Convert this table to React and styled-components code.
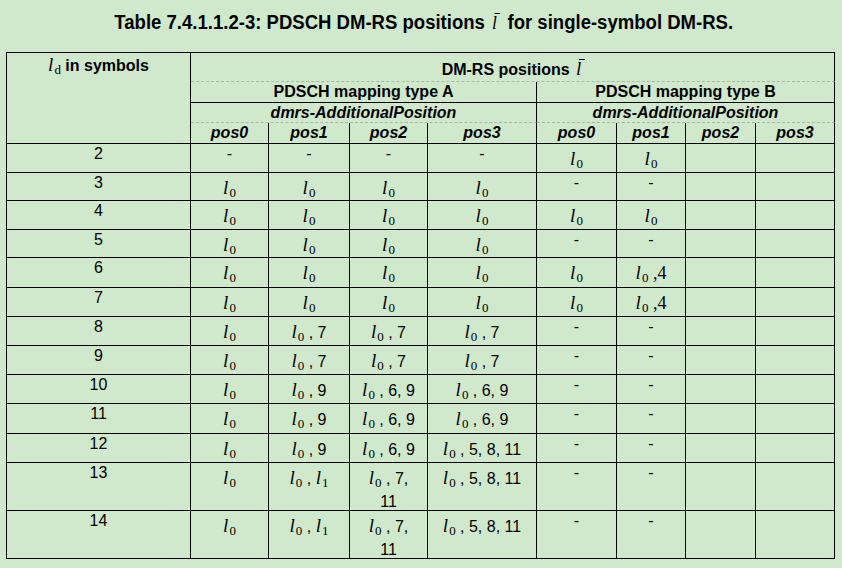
import React from 'react';
import styled, { createGlobalStyle } from 'styled-components';

const GlobalStyle = createGlobalStyle`
  html, body {
    margin: 0;
    padding: 0;
    background: #d0e8cc;
  }
  body {
    font-family: "Liberation Sans", Arial, sans-serif;
    color: #000;
  }
`;

// Column widths and row heights measured from the spec table (borders included)
const COLS = '184px 78px 81px 78px 109px 80px 69px 70px 79px';
const HEAD_ROWS = '29px 21px 20px 21px';

const Page = styled.div`
  width: 842px;
  height: 568px;
  padding: 0 0 0 6px;
  box-sizing: border-box;
`;

const TitleBar = styled.div`
  height: 52px;
  padding-top: 10px;
  box-sizing: border-box;
  display: flex;
  justify-content: center;
`;

// The spec uses Arial Narrow Bold; squeeze Liberation Sans Bold to the same width
const Title = styled.h1`
  margin: 0;
  display: inline-block;
  font-family: "Liberation Sans Narrow", "Liberation Sans", sans-serif;
  font-weight: bold;
  font-size: 20px;
  line-height: 24px;
  white-space: pre;
  transform: scaleX(0.927);
  transform-origin: center;
`;

const Grid = styled.div`
  display: grid;
  grid-template-columns: ${COLS};
  grid-template-rows: ${HEAD_ROWS} repeat(4, 28.6px) repeat(7, 29.2px) 48px 48px;
  width: max-content;
  border-top: 1px solid #000;
  border-left: 1px solid #000;
`;

const Cell = styled.div`
  grid-column: ${(p) => p.$col || 'auto'};
  grid-row: ${(p) => p.$row || 'auto'};
  border-right: 1px solid #000;
  border-bottom: ${(p) => (p.$dashed ? '1px dashed #a9b8a6' : '1px solid #000')};
  text-align: center;
  font-size: 16px;
  line-height: ${(p) => (p.$math ? '23px' : '18px')};
  padding: ${(p) => (p.$math ? '3px 4px 0' : '1px 4px 0')};
  overflow: hidden;
`;

const HeadCell = styled(Cell)`
  font-weight: bold;
  font-style: ${(p) => (p.$italic ? 'italic' : 'normal')};
  display: flex;
  align-items: ${(p) => (p.$top ? 'flex-start' : 'center')};
  justify-content: center;
  padding: ${(p) => (p.$top ? '3px 4px 0' : '0 4px')};
  line-height: 18px;
`;

const Ell = styled.span`
  font-family: "Liberation Serif", "Times New Roman", serif;
  font-style: italic;
  font-weight: normal;
  font-size: 19px;
`;

const Sub = styled.sub`
  font-family: "Liberation Serif", "Times New Roman", serif;
  font-style: normal;
  font-weight: normal;
  font-size: 13px;
  vertical-align: -3px;
  line-height: 0;
  margin-left: 1px;
`;

const Serif = styled.span`
  font-family: "Liberation Serif", "Times New Roman", serif;
  font-size: 18px;
`;

const Bar = styled.span`
  font-family: "Liberation Serif", "Times New Roman", serif;
  font-style: italic;
  font-weight: normal;
  font-size: 19px;
  position: relative;
  margin: 0 ${(p) => p.$after || 2}px 0 2px;

  &::before {
    content: '';
    position: absolute;
    top: 1px;
    left: 3px;
    width: 6px;
    height: 1px;
    background: #000;
  }
`;

const L = ({ n }) => (
  <>
    <Ell>l</Ell>
    <Sub>{n}</Sub>
  </>
);

const L0 = <L n="0" />;
const L1 = <L n="1" />;

const l0c = (rest) => (
  <>
    {L0} {rest}
  </>
);

const l04 = (
  <>
    {L0}
    <Serif> ,4</Serif>
  </>
);

const wrap = (
  <>
    {L0} , 7,
    <br />
    11
  </>
);

const rows = [
  { n: '2', v: ['-', '-', '-', '-', L0, L0, '', ''] },
  { n: '3', v: [L0, L0, L0, L0, '-', '-', '', ''] },
  { n: '4', v: [L0, L0, L0, L0, L0, L0, '', ''] },
  { n: '5', v: [L0, L0, L0, L0, '-', '-', '', ''] },
  { n: '6', v: [L0, L0, L0, L0, L0, l04, '', ''] },
  { n: '7', v: [L0, L0, L0, L0, L0, l04, '', ''] },
  { n: '8', v: [L0, l0c(', 7'), l0c(', 7'), l0c(', 7'), '-', '-', '', ''] },
  { n: '9', v: [L0, l0c(', 7'), l0c(', 7'), l0c(', 7'), '-', '-', '', ''] },
  { n: '10', v: [L0, l0c(', 9'), l0c(', 6, 9'), l0c(', 6, 9'), '-', '-', '', ''] },
  { n: '11', v: [L0, l0c(', 9'), l0c(', 6, 9'), l0c(', 6, 9'), '-', '-', '', ''] },
  { n: '12', v: [L0, l0c(', 9'), l0c(', 6, 9'), l0c(', 5, 8, 11'), '-', '-', '', ''] },
  { n: '13', v: [L0, <>{L0} , {L1}</>, wrap, l0c(', 5, 8, 11'), '-', '-', '', ''] },
  { n: '14', v: [L0, <>{L0} , {L1}</>, wrap, l0c(', 5, 8, 11'), '-', '-', '', ''] },
];

const positions = ['pos0', 'pos1', 'pos2', 'pos3'];

export default function App() {
  return (
    <Page>
      <GlobalStyle />
      <TitleBar>
        <Title>
          Table 7.4.1.1.2-3: PDSCH DM-RS positions <Bar $after={6}>l</Bar> for single-symbol DM-RS.
        </Title>
      </TitleBar>
      <Grid>
        <HeadCell $row="1 / span 4" $col="1" $top>
          <span>
            <Ell>l</Ell>
            <Sub>d</Sub> in symbols
          </span>
        </HeadCell>
        <HeadCell $col="2 / span 8" $dashed>
          <span style={{ paddingTop: 4 }}>
            DM-RS positions <Bar>l</Bar>
          </span>
        </HeadCell>
        <HeadCell $col="2 / span 4">PDSCH mapping type A</HeadCell>
        <HeadCell $col="6 / span 4">PDSCH mapping type B</HeadCell>
        <HeadCell $col="2 / span 4" $italic $dashed>
          dmrs-AdditionalPosition
        </HeadCell>
        <HeadCell $col="6 / span 4" $italic $dashed>
          dmrs-AdditionalPosition
        </HeadCell>
        {[...positions, ...positions].map((p, i) => (
          <HeadCell key={i} $italic>
            {p}
          </HeadCell>
        ))}
        {rows.map((r) => (
          <React.Fragment key={r.n}>
            <Cell>{r.n}</Cell>
            {r.v.map((v, i) => (
              <Cell key={i} $math={typeof v !== 'string'}>
                {v}
              </Cell>
            ))}
          </React.Fragment>
        ))}
      </Grid>
    </Page>
  );
}
